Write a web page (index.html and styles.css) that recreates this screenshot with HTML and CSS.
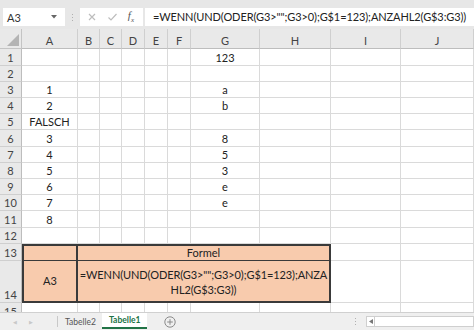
FILE: index.html
```html
<!DOCTYPE html>
<html lang="de">
<head>
<meta charset="utf-8">
<title>Excel</title>
<link rel="stylesheet" href="styles.css">
</head>
<body>
<div class="app">
  <div class="fbar">
    <div class="namebox"><span>A3</span><svg class="caret" width="6" height="4" viewBox="0 0 6 4"><path d="M0 0H6L3 3.5Z" fill="#666"/></svg></div>
    <div class="sep"><i></i><i></i><i></i></div>
    <div class="fnbox">
      <svg width="10" height="10" viewBox="0 0 10 10"><path d="M2 2L8 8M8 2L2 8" stroke="#bdbdbd" stroke-width="1.2"/></svg>
      <svg width="11" height="10" viewBox="0 0 11 10"><path d="M1.5 5.5L4 8L9.5 2" stroke="#bdbdbd" stroke-width="1.2" fill="none"/></svg>
      <span class="fx">f<sub>x</sub></span>
    </div>
    <div class="formula">=WENN(UND(ODER(G3&gt;"";G3&gt;0);G$1=123);ANZAHL2(G$3:G3))</div>
  </div>

  <div class="sheet">
    <div class="corner"><svg width="12" height="12" viewBox="0 0 12 12"><path d="M12 0V12H0Z" fill="#b4b4b4"/></svg></div>
    <div class="ch">A</div><div class="ch">B</div><div class="ch">C</div><div class="ch">D</div><div class="ch">E</div><div class="ch">F</div><div class="ch">G</div><div class="ch">H</div><div class="ch">I</div><div class="ch">J</div>

    <div class="rh">1</div><div class="c"></div><div class="c"></div><div class="c"></div><div class="c"></div><div class="c"></div><div class="c"></div><div class="c">123</div><div class="c"></div><div class="c"></div><div class="c"></div>
    <div class="rh">2</div><div class="c"></div><div class="c"></div><div class="c"></div><div class="c"></div><div class="c"></div><div class="c"></div><div class="c"></div><div class="c"></div><div class="c"></div><div class="c"></div>
    <div class="rh">3</div><div class="c">1</div><div class="c"></div><div class="c"></div><div class="c"></div><div class="c"></div><div class="c"></div><div class="c">a</div><div class="c"></div><div class="c"></div><div class="c"></div>
    <div class="rh">4</div><div class="c">2</div><div class="c"></div><div class="c"></div><div class="c"></div><div class="c"></div><div class="c"></div><div class="c">b</div><div class="c"></div><div class="c"></div><div class="c"></div>
    <div class="rh">5</div><div class="c">FALSCH</div><div class="c"></div><div class="c"></div><div class="c"></div><div class="c"></div><div class="c"></div><div class="c"></div><div class="c"></div><div class="c"></div><div class="c"></div>
    <div class="rh">6</div><div class="c">3</div><div class="c"></div><div class="c"></div><div class="c"></div><div class="c"></div><div class="c"></div><div class="c">8</div><div class="c"></div><div class="c"></div><div class="c"></div>
    <div class="rh">7</div><div class="c">4</div><div class="c"></div><div class="c"></div><div class="c"></div><div class="c"></div><div class="c"></div><div class="c">5</div><div class="c"></div><div class="c"></div><div class="c"></div>
    <div class="rh">8</div><div class="c">5</div><div class="c"></div><div class="c"></div><div class="c"></div><div class="c"></div><div class="c"></div><div class="c">3</div><div class="c"></div><div class="c"></div><div class="c"></div>
    <div class="rh">9</div><div class="c">6</div><div class="c"></div><div class="c"></div><div class="c"></div><div class="c"></div><div class="c"></div><div class="c">e</div><div class="c"></div><div class="c"></div><div class="c"></div>
    <div class="rh">10</div><div class="c">7</div><div class="c"></div><div class="c"></div><div class="c"></div><div class="c"></div><div class="c"></div><div class="c">e</div><div class="c"></div><div class="c"></div><div class="c"></div>
    <div class="rh">11</div><div class="c">8</div><div class="c"></div><div class="c"></div><div class="c"></div><div class="c"></div><div class="c"></div><div class="c"></div><div class="c"></div><div class="c"></div><div class="c"></div>
    <div class="rh">12</div><div class="c"></div><div class="c"></div><div class="c"></div><div class="c"></div><div class="c"></div><div class="c"></div><div class="c"></div><div class="c"></div><div class="c"></div><div class="c"></div>

    <div class="rh">13</div><div class="o o-a13"></div><div class="o o-b13"><span class="ot">Formel</span></div><div class="c"></div><div class="c"></div>
    <div class="rh rh-bottom">14</div><div class="o o-a14"><span class="ot">A3</span></div><div class="o o-b14"><span class="ot">=WENN(UND(ODER(G3&gt;"";G3&gt;0);G$1=123);ANZA<br>HL2(G$3:G3))</span></div><div class="c"></div><div class="c"></div>
    <div class="rh rh-top">15</div><div class="c"></div><div class="c"></div><div class="c"></div><div class="c"></div><div class="c"></div><div class="c"></div><div class="c"></div><div class="c"></div><div class="c"></div><div class="c"></div>
  </div>

  <div class="tabs">
    <div class="nav"><span>&#9664;</span><span>&#9654;</span></div>
    <div class="tab">Tabelle2</div>
    <div class="tab active">Tabelle1</div>
    <div class="add"><svg width="12" height="12" viewBox="0 0 12 12"><circle cx="6" cy="6" r="5.2" fill="none" stroke="#8a8a8a" stroke-width="1"/><path d="M6 3.2V8.8M3.2 6H8.8" stroke="#8a8a8a" stroke-width="1"/></svg></div>
    <div class="spacer"></div>
    <div class="vdots"><i></i><i></i><i></i></div>
    <div class="scroll">
      <div class="sbtn"><svg width="4" height="5" viewBox="0 0 4 5"><path d="M4 0V5L0 2.5Z" fill="#777"/></svg></div>
      <div class="track"></div>
    </div>
  </div>
</div>
</body>
</html>
```

FILE: styles.css
```css
* { box-sizing: border-box; }
html, body { margin: 0; padding: 0; }
body {
  width: 474px;
  height: 330px;
  overflow: hidden;
  background: #ffffff;
  font-family: "Lato", "Liberation Sans", sans-serif;
  color: #222;
}
.app { display: flex; flex-direction: column; width: 474px; height: 330px; }

/* formula bar */
.fbar {
  height: 29px;
  background: #e7e7e7;
  display: flex;
  align-items: flex-start;
  padding-top: 8px;
  padding-left: 3px;
}
.namebox {
  width: 62px;
  height: 18px;
  background: #fff;
  display: flex;
  align-items: center;
  justify-content: space-between;
  padding: 0 8px 0 4px;
  font-size: 11px;
  color: #333;
}
.sep {
  width: 15px;
  height: 18px;
  display: flex;
  flex-direction: column;
  align-items: center;
  justify-content: center;
  gap: 2px;
}
.sep i, .vdots i { display: block; width: 1px; height: 1px; background: #b0b0b0; }
.fnbox {
  width: 63px;
  height: 18px;
  background: #fff;
  display: flex;
  align-items: center;
  justify-content: space-around;
  padding: 0 4px 0 2px;
}
.fx { font-family: "Liberation Serif", serif; font-style: italic; font-size: 11px; color: #555; }
.fx sub { font-size: 7px; }
.formula {
  flex: 1;
  height: 18px;
  margin-left: 2px;
  background: #fff;
  font-size: 11px;
  letter-spacing: -0.1px;
  line-height: 18px;
  padding-left: 8px;
  color: #222;
  white-space: nowrap;
  overflow: hidden;
}

/* sheet grid */
.sheet {
  display: grid;
  grid-template-columns: 22px 56px 22px 22px 23px 23px 23px 69px 71px 70px 73px;
  grid-template-rows: 20.5px repeat(12, 16.2px) 17px 42px 10px;
  font-size: 11px;
  overflow: hidden;
}
.corner {
  background: #e9e9e9;
  border-right: 1px solid #c4c4c4;
  border-bottom: 1px solid #c4c4c4;
  display: flex;
  align-items: flex-end;
  justify-content: flex-end;
  padding: 0 2px 2px 0;
}
.ch {
  background: #e9e9e9;
  border-right: 1px solid #cfcfcf;
  border-bottom: 1px solid #bdbdbd;
  display: flex;
  align-items: center;
  justify-content: center;
  padding-top: 4px;
  color: #444;
}
.rh {
  background: #e9e9e9;
  border-right: 1px solid #bdbdbd;
  border-bottom: 1px solid #cfcfcf;
  display: flex;
  align-items: flex-end;
  justify-content: center;
  line-height: 14px;
  color: #444;
}
.rh-top { align-items: flex-start; padding-top: 2px; overflow: hidden; }
.c {
  border-right: 1px solid #dadada;
  border-bottom: 1px solid #dadada;
  display: flex;
  align-items: flex-end;
  justify-content: center;
  line-height: 14px;
  white-space: nowrap;
}
.o {
  background: #f8cbad;
  display: flex;
  align-items: center;
  justify-content: center;
  text-align: center;
  color: #222;
  line-height: 15px;
  min-width: 0;
}
.ot { display: block; min-width: 0; }
.o-b14 .ot { letter-spacing: -0.1px; white-space: nowrap; }
.o-a13 { border-top: 2px solid #3a3a3a; border-left: 2px solid #3a3a3a; border-right: 2px solid #3a3a3a; border-bottom: 1px solid #3a3a3a; }
.o-b13 { grid-column: span 7; border-top: 2px solid #3a3a3a; border-right: 2px solid #3a3a3a; border-bottom: 1px solid #3a3a3a; align-items: flex-end; }
.o-a14 { border-left: 2px solid #3a3a3a; border-right: 2px solid #3a3a3a; border-bottom: 2px solid #3a3a3a; }
.o-b14 { grid-column: span 7; border-right: 2px solid #3a3a3a; border-bottom: 2px solid #3a3a3a; padding-top: 3px; }

/* sheet tabs */
.tabs {
  flex: 1;
  background: #efefef;
  border-top: 1px solid #d0d0d0;
  display: flex;
  align-items: stretch;
  font-size: 8.5px;
}
.nav {
  width: 58px;
  display: flex;
  align-items: center;
  gap: 12px;
  padding-left: 13px;
  font-size: 5px;
  color: #c8c8c8;
  border-right: 1px solid #c8c8c8;
  margin: 3px 0 3px 0;
}
.tab {
  display: flex;
  align-items: center;
  padding: 0 6px 0 7px;
  color: #555;
}
.tab.active {
  background: #fff;
  color: #217346;
  font-weight: bold;
  border-bottom: 2px solid #217346;
  margin-bottom: 1px;
  padding: 0 7px 0 7px;
}
.add { display: flex; align-items: center; padding-left: 17px; }
.spacer { flex: 1; }
.vdots {
  display: flex;
  flex-direction: column;
  justify-content: center;
  gap: 2px;
  padding-right: 10px;
}
.scroll {
  width: 108px;
  display: flex;
  align-items: center;
  padding: 3px 0;
}
.sbtn {
  width: 9px;
  height: 11px;
  background: #fff;
  border: 1px solid #cfcfcf;
  display: flex;
  align-items: center;
  justify-content: center;
}
.track {
  flex: 1;
  height: 11px;
  background: #fff;
  border: 1px solid #cfcfcf;
  border-left: none;
}
```
